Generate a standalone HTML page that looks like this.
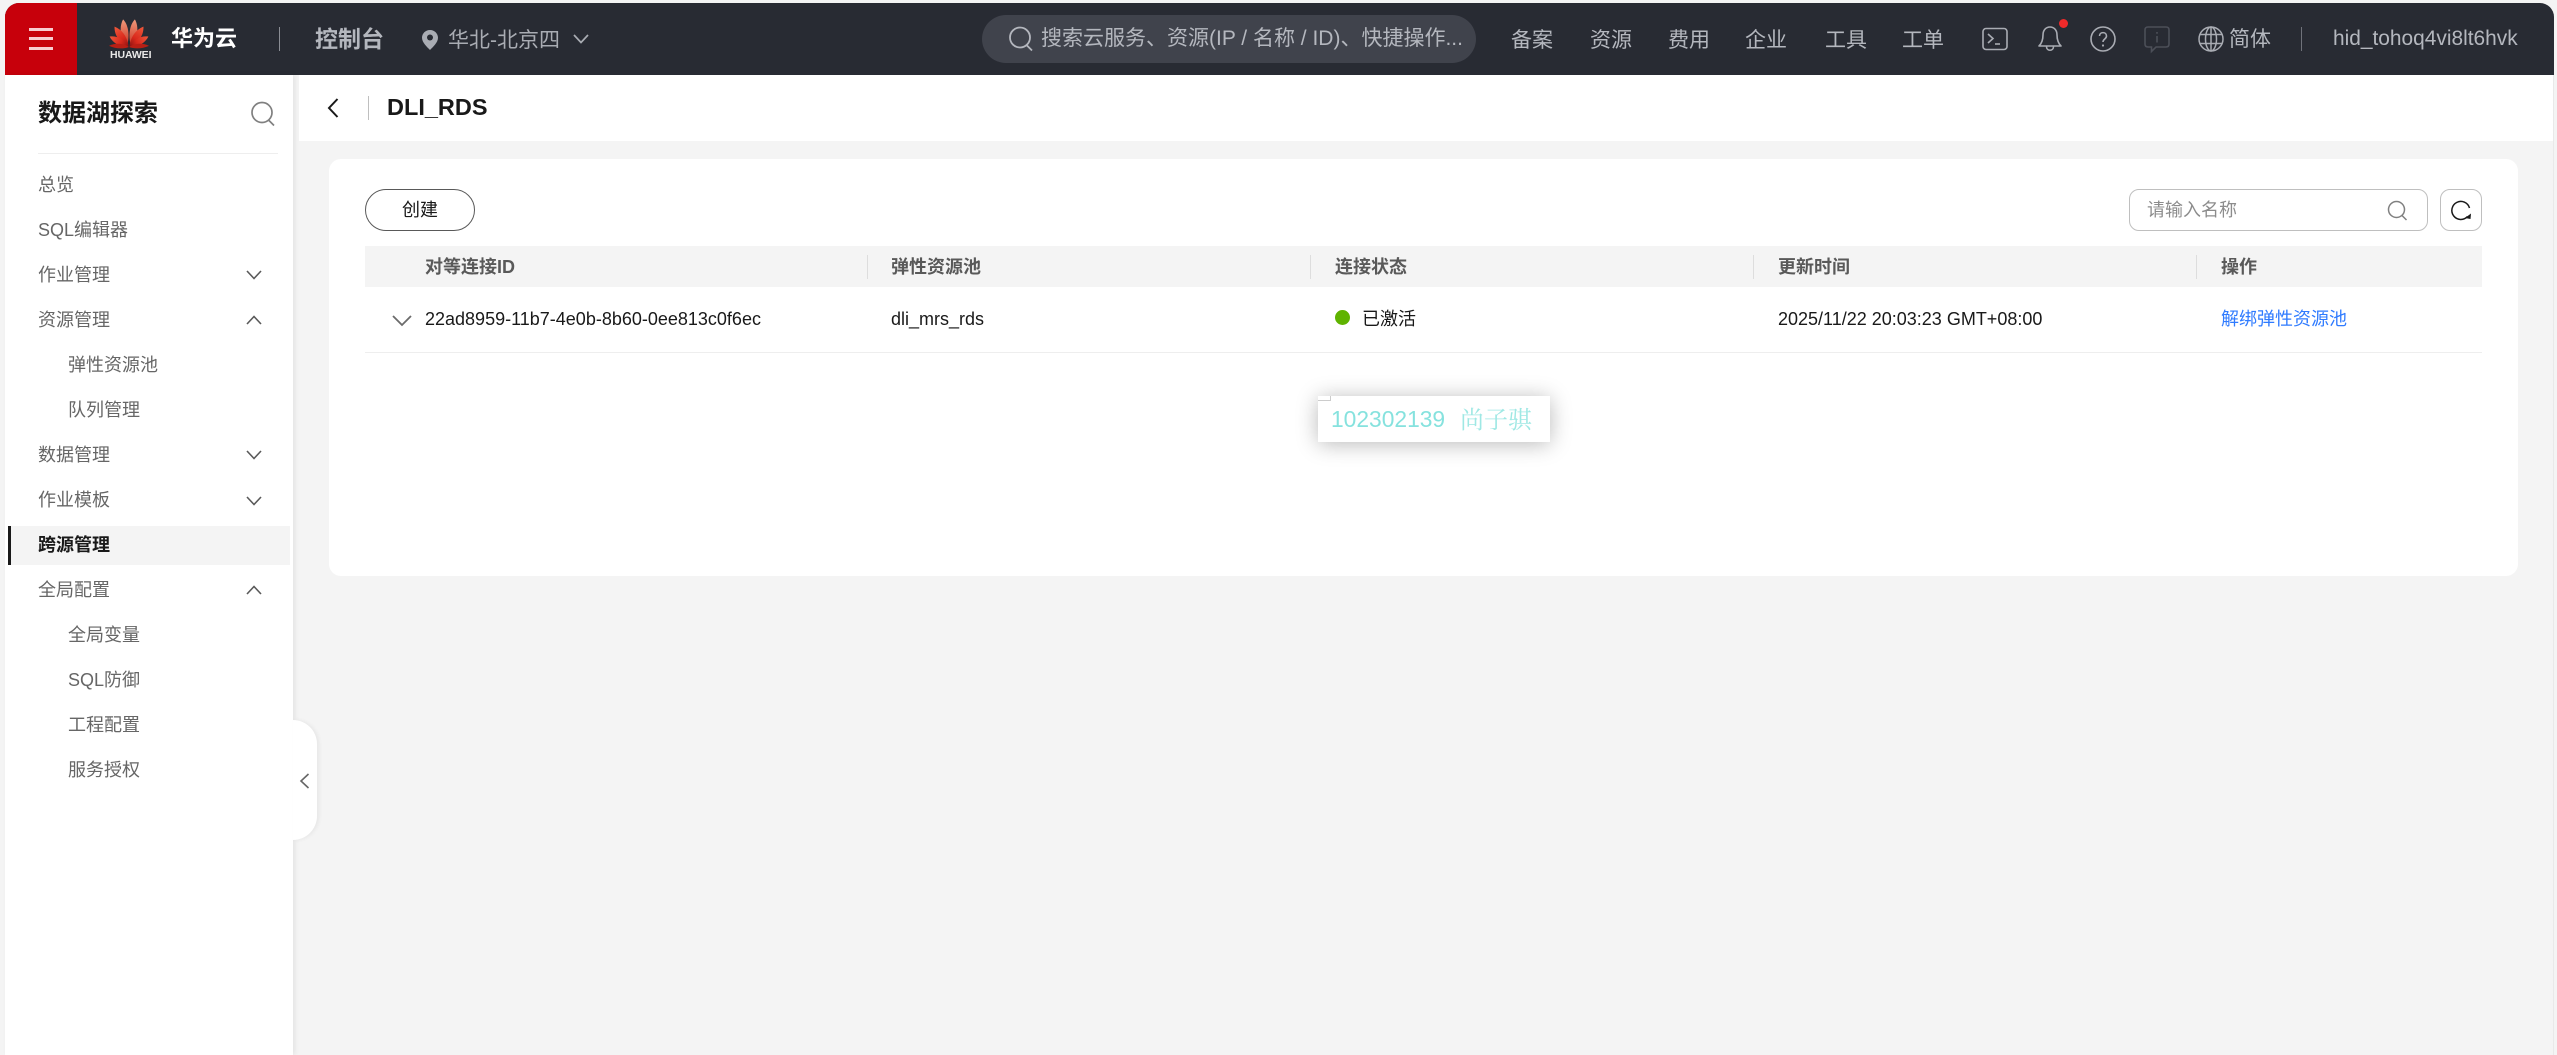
<!DOCTYPE html>
<html lang="zh">
<head>
<meta charset="utf-8">
<style>
html,body{margin:0;padding:0;width:2557px;height:1055px;overflow:hidden;background:#f4f4f4;}
body{position:relative;font-family:"Liberation Sans","Noto Sans CJK SC",sans-serif;color:#191919;}
.b{position:absolute;box-sizing:border-box;}
.t{position:absolute;white-space:nowrap;line-height:1;}
.n{font-size:21px;color:#b4b7be;top:30px;}
.s{font-size:18px;color:#666;left:38px;}
.s2{font-size:18px;color:#666;left:68px;}
.h{font-size:18px;font-weight:bold;color:#595959;top:258px;}
.c{font-size:18px;color:#191919;top:310px;}
svg{position:absolute;overflow:visible;}
</style>
</head>
<body>
<!-- header -->
<div class="b" style="left:5px;top:3px;width:2549px;height:72px;background:#282b33;border-radius:14px 14px 0 0;"></div>
<div class="b" style="left:5px;top:3px;width:72px;height:72px;background:#c7000b;border-radius:14px 0 0 0;"></div>
<div class="b" style="left:29px;top:28px;width:24px;height:3px;background:#f8ccd0;"></div>
<div class="b" style="left:29px;top:37px;width:24px;height:3px;background:#f8ccd0;"></div>
<div class="b" style="left:29px;top:47px;width:24px;height:3px;background:#f8ccd0;"></div>

<svg width="44" height="34" viewBox="0 0 44 34" style="left:107px;top:16px;">
<defs><linearGradient id="g" x1="0" y1="0" x2="0" y2="1"><stop offset="0" stop-color="#ee5a3c"/><stop offset=".6" stop-color="#d9291c"/><stop offset="1" stop-color="#8f1412"/></linearGradient>
<linearGradient id="g2" x1="0" y1="0" x2="0" y2="1"><stop offset="0" stop-color="#f09a7c"/><stop offset="1" stop-color="#c9301f"/></linearGradient></defs>
<g transform="translate(22,31)">
<path d="M-1,-1 C-7,-9 -7,-21 -2,-28 C3,-22 3,-10 -1,-1Z" fill="url(#g2)" transform="translate(-1,0) rotate(-6)"/>
<path d="M1,-1 C7,-9 7,-21 2,-28 C-3,-22 -3,-10 1,-1Z" fill="url(#g2)" transform="translate(1,0) rotate(6)"/>
<path d="M0,-1 C-6,-8 -6,-18 -1,-25 C4,-18 4,-9 0,-1Z" fill="url(#g)" transform="rotate(-33)"/>
<path d="M0,-1 C6,-8 6,-18 1,-25 C-4,-18 -4,-9 0,-1Z" fill="url(#g)" transform="rotate(33)"/>
<path d="M0,-1 C-5,-7 -5,-16 -1,-22 C4,-16 4,-8 0,-1Z" fill="url(#g)" transform="rotate(-59)"/>
<path d="M0,-1 C5,-7 5,-16 1,-22 C-4,-16 -4,-8 0,-1Z" fill="url(#g)" transform="rotate(59)"/>
<path d="M0,0 C-3,-6 -3,-14 -1,-20 C3,-14 3,-6 0,0Z" fill="#b81f15" transform="rotate(-84)"/>
<path d="M0,0 C3,-6 3,-14 1,-20 C-3,-14 -3,-6 0,0Z" fill="#b81f15" transform="rotate(84)"/>
</g></svg>
<div class="t" style="left:110px;top:50px;font-size:10.5px;color:#e8e8e8;letter-spacing:-.1px;font-weight:bold;">HUAWEI</div>
<div class="t" style="left:171px;top:28px;font-size:22px;color:#fff;font-weight:bold;">华为云</div>
<div class="b" style="left:279px;top:27px;width:1px;height:24px;background:#8a8d94;"></div>
<div class="t" style="left:315px;top:28px;font-size:23px;color:#b4b7be;font-weight:bold;">控制台</div>
<svg width="18" height="22" viewBox="0 0 18 22" style="left:421px;top:29px;"><path d="M9,1 C4.5,1 1,4.5 1,8.8 C1,13.5 6,18 9,21 C12,18 17,13.5 17,8.8 C17,4.5 13.5,1 9,1Z" fill="#a9acb3"/><circle cx="9" cy="8.5" r="3" fill="#282b33"/></svg>
<div class="t n" style="left:448px;color:#a9acb3;">华北-北京四</div>
<svg width="16" height="10" viewBox="0 0 16 10" style="left:573px;top:34px;"><path d="M1,1 L8,8.5 L15,1" fill="none" stroke="#a9acb3" stroke-width="1.7"/></svg>

<div class="b" style="left:982px;top:15px;width:494px;height:48px;background:#40434c;border-radius:24px;"></div>
<svg width="26" height="26" viewBox="0 0 26 26" style="left:1008px;top:26px;"><circle cx="12" cy="11.5" r="10" fill="none" stroke="#b4b7be" stroke-width="1.8"/><path d="M18.5,19 L24,24.5" stroke="#b4b7be" stroke-width="1.8"/></svg>
<div class="t n" style="left:1041px;top:28px;">搜索云服务、资源(IP / 名称 / ID)、快捷操作...</div>

<div class="t n" style="left:1511px;">备案</div>
<div class="t n" style="left:1590px;">资源</div>
<div class="t n" style="left:1668px;">费用</div>
<div class="t n" style="left:1745px;">企业</div>
<div class="t n" style="left:1825px;">工具</div>
<div class="t n" style="left:1902px;">工单</div>

<svg width="26" height="24" viewBox="0 0 26 24" style="left:1982px;top:27px;"><rect x="1" y="1.5" width="24" height="21" rx="3" fill="none" stroke="#a9acb3" stroke-width="1.6"/><path d="M6,7 L11,11.5 L6,16" fill="none" stroke="#a9acb3" stroke-width="1.6"/><path d="M13,17 H18" stroke="#a9acb3" stroke-width="1.6"/></svg>
<svg width="26" height="28" viewBox="0 0 26 28" style="left:2037px;top:25px;"><path d="M2,21 C5,18 6,15 6,10 C6,5 9,2 13,2 C17,2 20,5 20,10 C20,15 21,18 24,21 Z" fill="none" stroke="#a9acb3" stroke-width="1.6" stroke-linejoin="round"/><path d="M9.5,21.5 C9.5,26.5 16.5,26.5 16.5,21.5" fill="none" stroke="#a9acb3" stroke-width="1.6"/></svg>
<div class="b" style="left:2059px;top:19px;width:9px;height:9px;background:#f02a2a;border-radius:50%;"></div>
<svg width="26" height="26" viewBox="0 0 26 26" style="left:2090px;top:26px;"><circle cx="13" cy="13" r="12" fill="none" stroke="#a9acb3" stroke-width="1.6"/><path d="M9.5,10 C9.5,5.5 16.5,5.5 16.5,10 C16.5,13 13,13 13,16" fill="none" stroke="#a9acb3" stroke-width="1.6"/><circle cx="13" cy="19.5" r="1.1" fill="#a9acb3"/></svg>
<svg width="26" height="28" viewBox="0 0 26 28" style="left:2144px;top:26px;"><path d="M4,1 H22 Q25,1 25,4 V18 Q25,21 22,21 H12 L7.5,25.5 V21 H4 Q1,21 1,18 V4 Q1,1 4,1Z" fill="none" stroke="#4c4f58" stroke-width="1.6"/><path d="M13,6 V7.8 M13,10 V16.5" stroke="#4c4f58" stroke-width="1.6"/></svg>
<svg width="26" height="26" viewBox="0 0 26 26" style="left:2198px;top:26px;"><g fill="none" stroke="#a9acb3" stroke-width="1.5"><circle cx="13" cy="13" r="12"/><ellipse cx="13" cy="13" rx="5.5" ry="12"/><path d="M13,1 V25 M2.5,8.5 H23.5 M2.5,17.5 H23.5"/></g></svg>
<div class="t n" style="left:2229px;top:29px;">简体</div>
<div class="b" style="left:2301px;top:27px;width:1px;height:24px;background:#6f727a;"></div>
<div class="t" style="left:2333px;top:29px;font-size:20.9px;color:#b4b7be;">hid_tohoq4vi8lt6hvk</div>

<!-- sidebar -->
<div class="b" style="left:5px;top:75px;width:288px;height:980px;background:#fff;box-shadow:2px 0 5px rgba(0,0,0,.07);"></div>
<div class="t" style="left:38px;top:102px;font-size:24px;font-weight:bold;color:#191919;">数据湖探索</div>
<svg width="26" height="26" viewBox="0 0 26 26" style="left:250px;top:101px;"><circle cx="12" cy="11.5" r="10" fill="none" stroke="#808080" stroke-width="1.7"/><path d="M18.5,19 L24,24.5" stroke="#808080" stroke-width="1.7"/></svg>
<div class="b" style="left:38px;top:153px;width:240px;height:1px;background:#eee;"></div>

<div class="t s" style="top:176px;">总览</div>
<div class="t s" style="top:221px;">SQL编辑器</div>
<div class="t s" style="top:266px;">作业管理</div>
<div class="t s" style="top:311px;">资源管理</div>
<div class="t s2" style="top:356px;">弹性资源池</div>
<div class="t s2" style="top:401px;">队列管理</div>
<div class="t s" style="top:446px;">数据管理</div>
<div class="t s" style="top:491px;">作业模板</div>
<div class="b" style="left:8px;top:526px;width:282px;height:39px;background:#f4f4f4;"></div>
<div class="b" style="left:8px;top:526px;width:3px;height:39px;background:#191919;"></div>
<div class="t s" style="top:536px;font-weight:bold;color:#191919;">跨源管理</div>
<div class="t s" style="top:581px;">全局配置</div>
<div class="t s2" style="top:626px;">全局变量</div>
<div class="t s2" style="top:671px;">SQL防御</div>
<div class="t s2" style="top:716px;">工程配置</div>
<div class="t s2" style="top:761px;">服务授权</div>

<svg width="16" height="10" viewBox="0 0 16 10" style="left:246px;top:270px;"><path d="M1,1 L8,8.5 L15,1" fill="none" stroke="#595959" stroke-width="1.6"/></svg>
<svg width="16" height="10" viewBox="0 0 16 10" style="left:246px;top:315px;"><path d="M1,9 L8,1.5 L15,9" fill="none" stroke="#595959" stroke-width="1.6"/></svg>
<svg width="16" height="10" viewBox="0 0 16 10" style="left:246px;top:450px;"><path d="M1,1 L8,8.5 L15,1" fill="none" stroke="#595959" stroke-width="1.6"/></svg>
<svg width="16" height="10" viewBox="0 0 16 10" style="left:246px;top:496px;"><path d="M1,1 L8,8.5 L15,1" fill="none" stroke="#595959" stroke-width="1.6"/></svg>
<svg width="16" height="10" viewBox="0 0 16 10" style="left:246px;top:585px;"><path d="M1,9 L8,1.5 L15,9" fill="none" stroke="#595959" stroke-width="1.6"/></svg>

<!-- collapse handle -->
<div class="b" style="left:293px;top:720px;width:24px;height:120px;background:#fff;border-radius:0 24px 24px 0;box-shadow:2px 0 4px rgba(0,0,0,.06);"></div>
<svg width="11" height="16" viewBox="0 0 11 16" style="left:299px;top:773px;"><path d="M9.5,1 L2,8 L9.5,15" fill="none" stroke="#666" stroke-width="1.6"/></svg>

<!-- title bar -->
<div class="b" style="left:299px;top:75px;width:2254px;height:66px;background:#fff;"></div>
<svg width="12" height="20" viewBox="0 0 12 20" style="left:327px;top:98px;"><path d="M10.5,1 L2,10 L10.5,19" fill="none" stroke="#191919" stroke-width="2"/></svg>
<div class="b" style="left:368px;top:96px;width:1px;height:24px;background:#bfbfbf;"></div>
<div class="t" style="left:387px;top:96px;font-size:23.5px;font-weight:bold;color:#191919;">DLI_RDS</div>

<!-- card -->
<div class="b" style="left:329px;top:159px;width:2189px;height:417px;background:#fff;border-radius:12px;"></div>
<div class="b" style="left:365px;top:189px;width:110px;height:42px;border:1px solid #595959;border-radius:21px;background:#fff;"></div>
<div class="t" style="left:402px;top:201px;font-size:18px;color:#191919;">创建</div>

<div class="b" style="left:2129px;top:189px;width:299px;height:42px;border:1px solid #bfbfbf;border-radius:10px;background:#fff;"></div>
<div class="t" style="left:2147px;top:201px;font-size:18px;color:#8c8c8c;">请输入名称</div>
<svg width="21" height="21" viewBox="0 0 21 21" style="left:2387px;top:200px;"><circle cx="9.5" cy="9.5" r="8" fill="none" stroke="#808080" stroke-width="1.5"/><path d="M15,15.5 L19.5,20" stroke="#808080" stroke-width="1.5"/></svg>
<div class="b" style="left:2440px;top:189px;width:42px;height:42px;border:1px solid #bfbfbf;border-radius:10px;background:#fff;"></div>
<svg width="22" height="22" viewBox="0 0 22 22" style="left:2450px;top:199px;"><path d="M17.5,17.5 A9,9 0 1 1 19.5,9" fill="none" stroke="#191919" stroke-width="1.5"/><path d="M21,14.5 L20.5,20 L15,19 Z" fill="#191919"/></svg>

<div class="b" style="left:365px;top:246px;width:2117px;height:41px;background:#f4f4f4;"></div>
<div class="b" style="left:867px;top:255px;width:1px;height:24px;background:#ddd;"></div>
<div class="b" style="left:1310px;top:255px;width:1px;height:24px;background:#ddd;"></div>
<div class="b" style="left:1753px;top:255px;width:1px;height:24px;background:#ddd;"></div>
<div class="b" style="left:2196px;top:255px;width:1px;height:24px;background:#ddd;"></div>
<div class="t h" style="left:425px;">对等连接ID</div>
<div class="t h" style="left:891px;">弹性资源池</div>
<div class="t h" style="left:1335px;">连接状态</div>
<div class="t h" style="left:1778px;">更新时间</div>
<div class="t h" style="left:2221px;">操作</div>

<svg width="20" height="11" viewBox="0 0 20 11" style="left:392px;top:315px;"><path d="M1,1 L10,10 L19,1" fill="none" stroke="#6b6b6b" stroke-width="1.8"/></svg>
<div class="t c" style="left:425px;">22ad8959-11b7-4e0b-8b60-0ee813c0f6ec</div>
<div class="t c" style="left:891px;">dli_mrs_rds</div>
<div class="b" style="left:1335px;top:310px;width:15px;height:15px;background:#5fb300;border-radius:50%;"></div>
<div class="t c" style="left:1362px;">已激活</div>
<div class="t c" style="left:1778px;">2025/11/22 20:03:23 GMT+08:00</div>
<div class="t c" style="left:2221px;color:#2f7bff;">解绑弹性资源池</div>
<div class="b" style="left:365px;top:352px;width:2117px;height:1px;background:#eee;"></div>

<!-- watermark -->
<div class="b" style="left:1318px;top:396px;width:232px;height:46px;background:#fff;box-shadow:0 2px 22px rgba(0,0,0,.28);"></div>
<div class="b" style="left:1318px;top:396px;width:13px;height:5px;border-right:1px solid #ccc;border-bottom:1px solid #ccc;"></div>
<div class="t" style="left:1331px;top:408px;font-size:22.8px;color:#86e2de;">102302139</div>
<div class="t" style="left:1460px;top:409px;font-size:24px;color:#9fe8e4;font-family:'Liberation Serif','Noto Serif CJK SC',serif;">尚子骐</div>

<div class="b" style="left:2553px;top:75px;width:1px;height:980px;background:#e9e9e9;"></div>
</body>
</html>
